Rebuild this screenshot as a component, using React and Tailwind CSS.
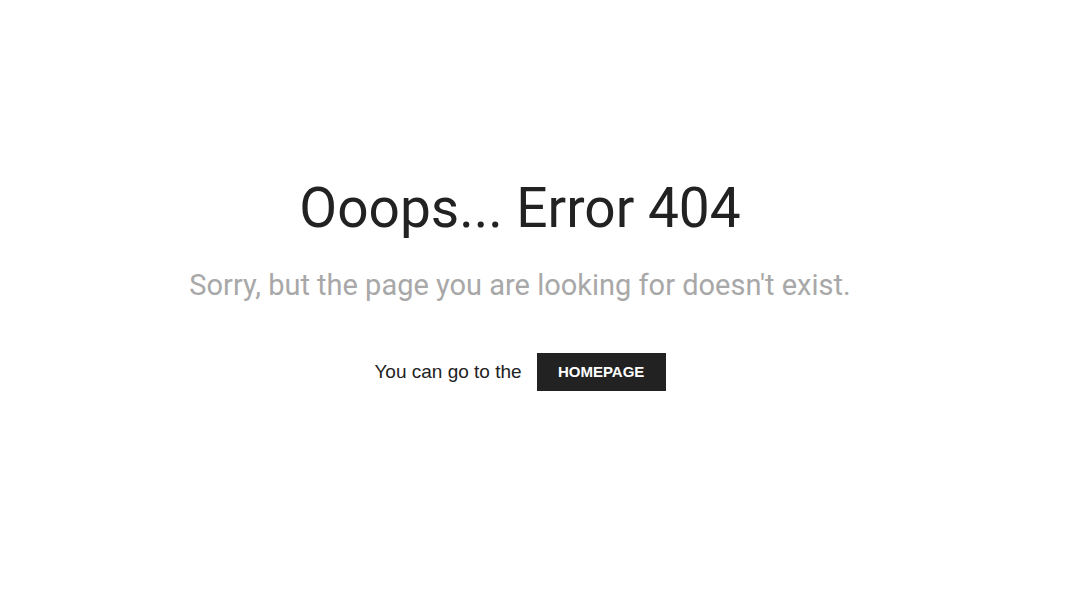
export default function App() {
  return (
    <div className="min-h-screen w-full bg-white">
      <div className="flex flex-col items-center pt-[176px] pr-[28px] text-center">
        <h1 className="text-[55px] leading-[1.17] font-normal text-[#222222] font-['Roboto',sans-serif]">
          Ooops... Error 404
        </h1>
        <p className="mt-[29px] text-[29px] leading-[1.17] text-[#a8a8a8] font-['Roboto',sans-serif]">
          Sorry, but the page you are looking for doesn't exist.
        </p>
        <div className="mt-[50px] flex items-center gap-[15px] font-['Liberation_Sans',Arial,sans-serif]">
          <span className="text-[19px] text-[#222222]">You can go to the</span>
          <a
            href="#"
            className="flex h-[38px] w-[129px] items-center justify-center bg-[#222222] text-[15px] font-bold uppercase text-white"
          >
            Homepage
          </a>
        </div>
      </div>
    </div>
  );
}
